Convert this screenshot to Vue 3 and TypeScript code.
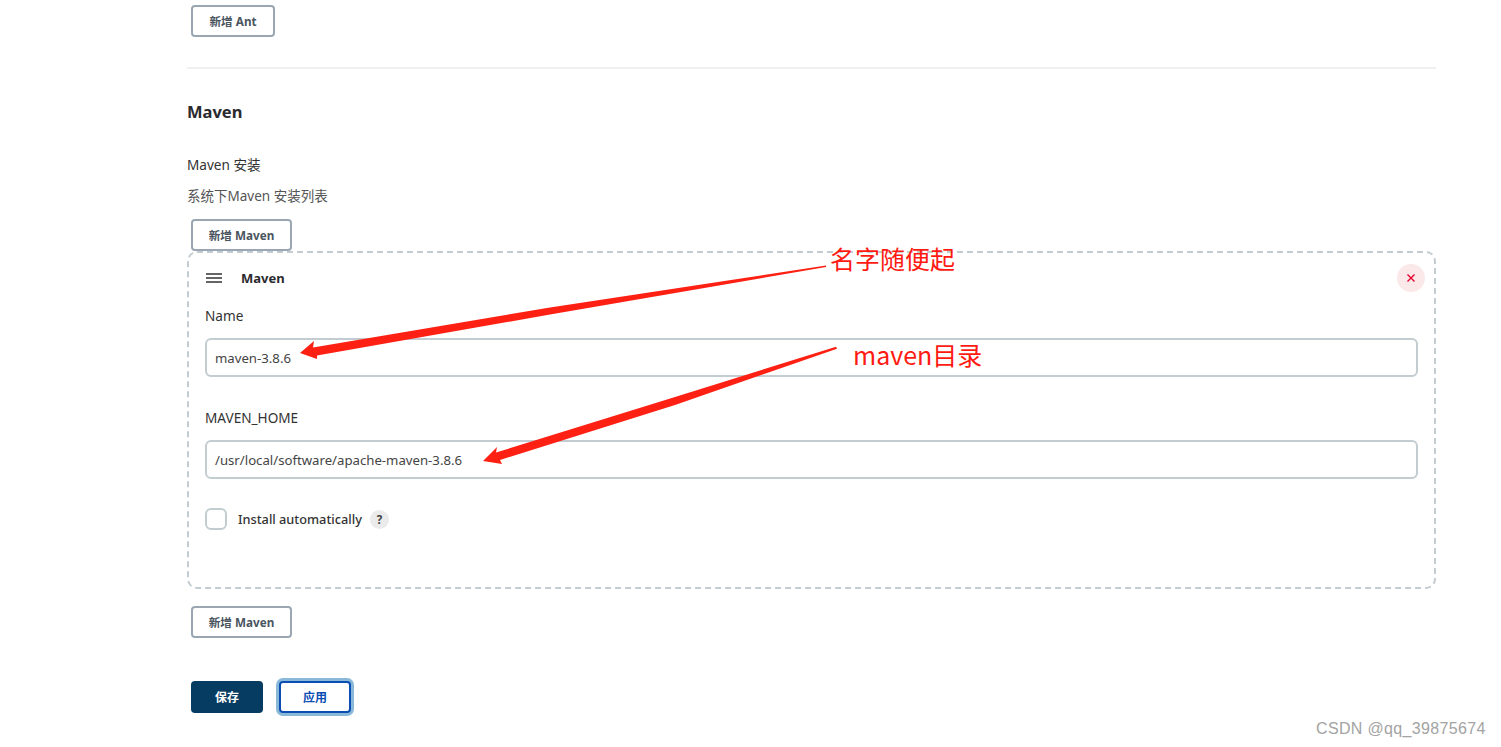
<script setup lang="ts">
const fields = [
  { label: 'Name', value: 'maven-3.8.6' },
  { label: 'MAVEN_HOME', value: '/usr/local/software/apache-maven-3.8.6' },
]
</script>

<template>
  <div class="page">
    <button class="btn add-ant">新增 Ant</button>
    <div class="rule"></div>
    <h2 class="heading">Maven</h2>
    <div class="label top-label">Maven 安装</div>
    <div class="desc">系统下Maven 安装列表</div>
    <button class="btn add-first">新增 Maven</button>

    <section class="box">
      <header class="box-head">
        <svg class="handle" width="16" height="10" viewBox="0 0 16 10">
          <path d="M0 1h16M0 5h16M0 9h16" stroke="#333" stroke-width="1.4" fill="none" />
        </svg>
        <span class="box-title">Maven</span>
        <span class="close">
          <svg width="10" height="10" viewBox="0 0 10 10">
            <path d="M1.5 1.5l7 7M8.5 1.5l-7 7" stroke="#e6002e" stroke-width="1.4" fill="none" />
          </svg>
        </span>
      </header>
      <div v-for="f in fields" :key="f.label" class="field">
        <div class="label">{{ f.label }}</div>
        <div class="input">{{ f.value }}</div>
      </div>
      <div class="check-row">
        <span class="check"></span>
        <span class="check-text">Install automatically</span>
        <span class="help">?</span>
      </div>
    </section>

    <button class="btn add-second">新增 Maven</button>
    <div class="actions">
      <button class="save">保存</button>
      <button class="apply">应用</button>
    </div>

    <svg class="marks" width="1501" height="747" viewBox="0 0 1501 747">
      <polygon fill="#ff2014" points="826,265.5 550,307.5 313,347.5 314,341 300,353 317,359 317,355.5 550,314.5 826,267" />
      <polygon fill="#ff2014" points="836,346.8 675,397 496,452.5 497,447 483,461 502,464 500,460 675,405 837,348.8" />
    </svg>
    <div class="note note-a">名字随便起</div>
    <div class="note note-b">maven目录</div>
    <div class="watermark">CSDN @qq_39875674</div>
  </div>
</template>

<style scoped>
.page {
  position: relative;
  box-sizing: border-box;
  width: 1501px;
  height: 747px;
  overflow: hidden;
  padding: 5px 65px 0 187px;
  background: #fff;
  color: #333;
  font-family: "Noto Sans", "Noto Sans CJK SC", sans-serif;
  font-size: 13px;
}
.btn {
  display: block;
  box-sizing: border-box;
  height: 32px;
  margin: 0 0 0 4px;
  padding: 0 0 1px;
  background: #fff;
  border: 2px solid #9aa7b2;
  border-radius: 4px;
  color: #4a5560;
  white-space: nowrap;
  font: 700 11.7px "Noto Sans", "Noto Sans CJK SC", sans-serif;
}
.add-ant { width: 84px; }
.add-first, .add-second { width: 101px; }
.add-first { margin-top: 13px; }
.add-second { margin-top: 17px; }
.rule {
  height: 2px;
  margin-top: 30px;
  background: #f0f0f0;
}
.heading {
  margin: 31px 0 0;
  font-size: 16.5px;
  line-height: 24px;
  font-weight: 700;
  color: #2a2a2e;
}
.label {
  font-size: 13.6px;
  line-height: 20px;
  color: #333;
}
.top-label { margin-top: 31px; }
.desc {
  margin-top: 11px;
  font-size: 13.5px;
  line-height: 20px;
  color: #555;
}
.box {
  box-sizing: border-box;
  height: 338px;
  padding: 0 16px;
  border: 2px dashed #c3ccd1;
  border-radius: 10px;
}
.box-head {
  display: flex;
  align-items: center;
  height: 50px;
}
.handle {
  flex: none;
  margin-left: 1px;
}
.box-title {
  margin-left: 19px;
  font-weight: 700;
  font-size: 13px;
  color: #2a2a2e;
}
.close {
  display: flex;
  align-items: center;
  justify-content: center;
  width: 28px;
  height: 28px;
  margin-left: auto;
  margin-right: -7px;
  border-radius: 50%;
  background: #fbe9ea;
}
.field { margin-top: 3px; }
.field + .field { margin-top: 31px; }
.input {
  box-sizing: border-box;
  height: 39px;
  margin-top: 12px;
  padding: 1px 8px 0;
  border: 2px solid #c3ccd1;
  border-radius: 6px;
  line-height: 35px;
  font-size: 13.2px;
  color: #444;
}
.check-row {
  display: flex;
  align-items: center;
  height: 22px;
  margin-top: 29px;
}
.check {
  box-sizing: border-box;
  width: 22px;
  height: 22px;
  border: 2px solid #c3ccd1;
  border-radius: 6px;
}
.check-text {
  margin-left: 11px;
  font-size: 12.75px;
  font-weight: 500;
  color: #333;
}
.help {
  display: flex;
  align-items: center;
  justify-content: center;
  width: 19px;
  height: 19px;
  margin-left: 8px;
  border-radius: 50%;
  background: #ebebeb;
  font-size: 11.5px;
  font-weight: 700;
  color: #444;
}
.actions {
  display: flex;
  gap: 16px;
  margin: 43px 0 0 4px;
}
.save, .apply {
  box-sizing: border-box;
  width: 72px;
  height: 32px;
  padding: 0;
  border-radius: 4px;
  font: 700 12px "Noto Sans", "Noto Sans CJK SC", sans-serif;
}
.save {
  border: 0;
  background: #063c61;
  color: #fff;
}
.apply {
  background: #fff;
  border: 2px solid #0b4eb3;
  color: #0b4eb3;
  box-shadow: 0 0 0 3px #8ab8d8;
}
.marks {
  position: absolute;
  left: 0;
  top: 0;
  pointer-events: none;
}
.note {
  position: absolute;
  font-family: "Noto Sans CJK SC", sans-serif;
  font-size: 25px;
  line-height: 34px;
  color: #ff1a12;
  white-space: nowrap;
}
.note-a { left: 830px; top: 241px; }
.note-b { left: 853px; top: 337px; }
.watermark {
  position: absolute;
  left: 1316px;
  top: 719px;
  font-family: "Liberation Sans", sans-serif;
  font-size: 16px;
  letter-spacing: 0.35px;
  line-height: 20px;
  color: #a3a3a3;
  white-space: nowrap;
}
</style>
